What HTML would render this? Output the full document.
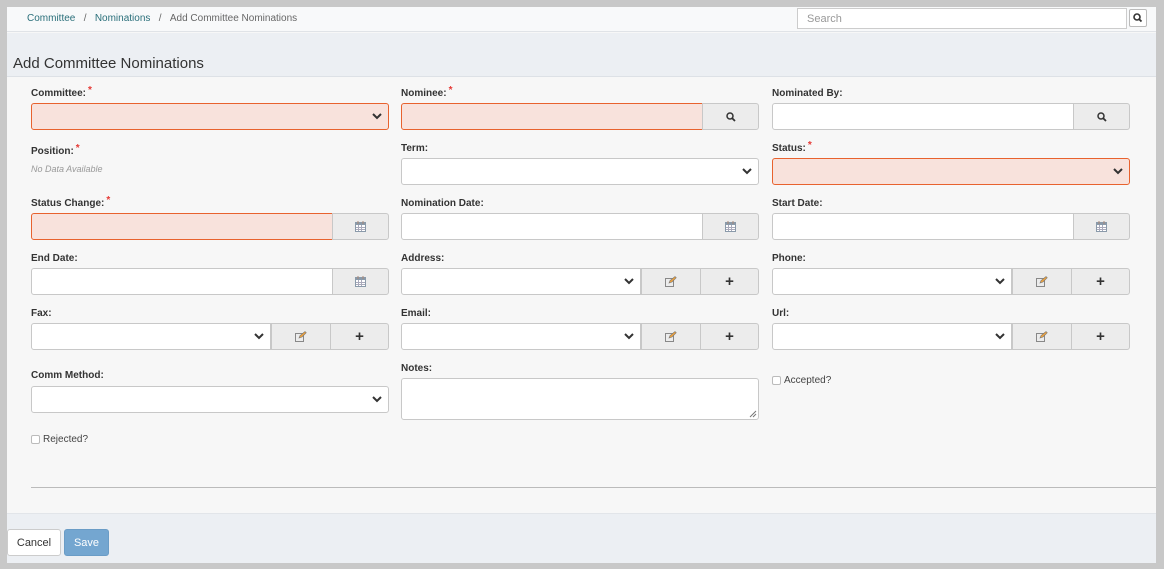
<!DOCTYPE html>
<html><head><style>
*{box-sizing:border-box;margin:0;padding:0}
body{width:1164px;height:569px;background:#c8c8c8;font-family:"Liberation Sans",sans-serif;position:relative;overflow:hidden}
.a{position:absolute}
.lbl{position:absolute;font-size:10px;font-weight:bold;color:#333;margin-top:1px}
.req{color:#e53935;font-size:10px;position:relative;top:-3px;margin-left:2px}
.in{position:absolute;height:27px;background:#fff;border:1px solid #c8c8c8;border-radius:3px}
.err{background:#f8e2dc;border-color:#e8622e}
.btn{position:absolute;height:27px;background:#ececec;border:1px solid #c8c8c8;border-radius:3px;display:flex;align-items:center;justify-content:center;color:#444}
.chev{position:absolute;right:5px;top:8px}
.plus{font-weight:bold;font-size:15px;color:#333}
</style></head><body>
<div class="a" style="left:7px;top:7px;width:1149px;height:556px;background:#f7f7f7"></div>
<div class="a" style="left:7px;top:7px;width:1149px;height:25px;background:#f8f9fa;border-bottom:1px solid #e0e3e7"></div>
<div class="a" style="left:27px;top:13px;font-size:10px;color:#666"><span style="color:#2a6f7a">Committee</span>&nbsp;&nbsp; / &nbsp;&nbsp;<span style="color:#2a6f7a">Nominations</span>&nbsp;&nbsp; / &nbsp;&nbsp;Add Committee Nominations</div>
<div class="a" style="left:797px;top:8px;width:330px;height:21px;background:#fff;border:1px solid #ccc;font-size:11px;color:#999;padding:4px 9px">Search</div>
<div class="a" style="left:1129px;top:9px;width:18px;height:18px;background:#fff;border:1px solid #bbb;border-radius:2px"><svg width="16" height="16" viewBox="0 0 16 16"><circle cx="7" cy="7" r="3" fill="none" stroke="#333" stroke-width="1.6"/><path d="M9.2 9.2L11.5 11.5" stroke="#333" stroke-width="1.8"/></svg></div>
<div class="a" style="left:7px;top:33px;width:1149px;height:44px;background:#eceff3;border-bottom:1px solid #dde1e6"></div>
<div class="a" style="left:13px;top:55px;font-size:15px;color:#333">Add Committee Nominations</div>
<div class="a" style="left:7px;top:513px;width:1149px;height:50px;background:#eceff3;border-top:1px solid #e2e5e9"></div>
<div class="a" style="left:31px;top:487px;width:1125px;height:1px;background:#bbb"></div>

<div class="lbl" style="left:31px;top:87px">Committee:<span class="req">*</span></div>
<div class="in err" style="left:31px;top:103px;width:358px"><svg class="chev" width="12" height="10"><path d="M2 2l4 4 4-4" fill="none" stroke="#333" stroke-width="2"/></svg></div>
<div class="lbl" style="left:401px;top:87px">Nominee:<span class="req">*</span></div>
<div class="in err" style="left:401px;top:103px;width:302px;border-radius:3px 0 0 3px"></div>
<div class="btn" style="left:702px;top:103px;width:57px;border-radius:0 3px 3px 0"><svg width="12" height="12"><circle cx="5" cy="5" r="3" fill="none" stroke="#333" stroke-width="1.5"/><path d="M7.2 7.2L10 10" stroke="#333" stroke-width="1.8"/></svg></div>
<div class="lbl" style="left:772px;top:87px">Nominated By:</div>
<div class="in" style="left:772px;top:103px;width:302px;border-radius:3px 0 0 3px"></div>
<div class="btn" style="left:1073px;top:103px;width:57px;border-radius:0 3px 3px 0"><svg width="12" height="12"><circle cx="5" cy="5" r="3" fill="none" stroke="#333" stroke-width="1.5"/><path d="M7.2 7.2L10 10" stroke="#333" stroke-width="1.8"/></svg></div>

<div class="lbl" style="left:31px;top:145px">Position:<span class="req">*</span></div>
<div class="a" style="left:31px;top:164px;font-size:9px;font-style:italic;color:#999">No Data Available</div>
<div class="lbl" style="left:401px;top:142px">Term:</div>
<div class="in" style="left:401px;top:158px;width:358px"><svg class="chev" width="12" height="10"><path d="M2 2l4 4 4-4" fill="none" stroke="#333" stroke-width="2"/></svg></div>
<div class="lbl" style="left:772px;top:142px">Status:<span class="req">*</span></div>
<div class="in err" style="left:772px;top:158px;width:358px"><svg class="chev" width="12" height="10"><path d="M2 2l4 4 4-4" fill="none" stroke="#333" stroke-width="2"/></svg></div>

<div class="lbl" style="left:31px;top:197px">Status Change:<span class="req">*</span></div>
<div class="in err" style="left:31px;top:213px;width:302px;border-radius:3px 0 0 3px"></div>
<div class="btn cal" style="left:332px;top:213px;width:57px;border-radius:0 3px 3px 0"></div>
<div class="lbl" style="left:401px;top:197px">Nomination Date:</div>
<div class="in" style="left:401px;top:213px;width:302px;border-radius:3px 0 0 3px"></div>
<div class="btn cal" style="left:702px;top:213px;width:57px;border-radius:0 3px 3px 0"></div>
<div class="lbl" style="left:772px;top:197px">Start Date:</div>
<div class="in" style="left:772px;top:213px;width:302px;border-radius:3px 0 0 3px"></div>
<div class="btn cal" style="left:1073px;top:213px;width:57px;border-radius:0 3px 3px 0"></div>

<div class="lbl" style="left:31px;top:252px">End Date:</div>
<div class="in" style="left:31px;top:268px;width:302px;border-radius:3px 0 0 3px"></div>
<div class="btn cal" style="left:332px;top:268px;width:57px;border-radius:0 3px 3px 0"></div>
<div class="lbl" style="left:401px;top:252px">Address:</div>
<div class="in" style="left:401px;top:268px;width:240px;border-radius:3px 0 0 3px"><svg class="chev" width="12" height="10"><path d="M2 2l4 4 4-4" fill="none" stroke="#333" stroke-width="2"/></svg></div>
<div class="btn ed" style="left:641px;top:268px;width:60px;border-radius:0"></div>
<div class="btn plus" style="left:700px;top:268px;width:59px;border-radius:0 3px 3px 0">+</div>
<div class="lbl" style="left:772px;top:252px">Phone:</div>
<div class="in" style="left:772px;top:268px;width:240px;border-radius:3px 0 0 3px"><svg class="chev" width="12" height="10"><path d="M2 2l4 4 4-4" fill="none" stroke="#333" stroke-width="2"/></svg></div>
<div class="btn ed" style="left:1012px;top:268px;width:60px;border-radius:0"></div>
<div class="btn plus" style="left:1071px;top:268px;width:59px;border-radius:0 3px 3px 0">+</div>

<div class="lbl" style="left:31px;top:307px">Fax:</div>
<div class="in" style="left:31px;top:323px;width:240px;border-radius:3px 0 0 3px"><svg class="chev" width="12" height="10"><path d="M2 2l4 4 4-4" fill="none" stroke="#333" stroke-width="2"/></svg></div>
<div class="btn ed" style="left:271px;top:323px;width:60px;border-radius:0"></div>
<div class="btn plus" style="left:330px;top:323px;width:59px;border-radius:0 3px 3px 0">+</div>
<div class="lbl" style="left:401px;top:307px">Email:</div>
<div class="in" style="left:401px;top:323px;width:240px;border-radius:3px 0 0 3px"><svg class="chev" width="12" height="10"><path d="M2 2l4 4 4-4" fill="none" stroke="#333" stroke-width="2"/></svg></div>
<div class="btn ed" style="left:641px;top:323px;width:60px;border-radius:0"></div>
<div class="btn plus" style="left:700px;top:323px;width:59px;border-radius:0 3px 3px 0">+</div>
<div class="lbl" style="left:772px;top:307px">Url:</div>
<div class="in" style="left:772px;top:323px;width:240px;border-radius:3px 0 0 3px"><svg class="chev" width="12" height="10"><path d="M2 2l4 4 4-4" fill="none" stroke="#333" stroke-width="2"/></svg></div>
<div class="btn ed" style="left:1012px;top:323px;width:60px;border-radius:0"></div>
<div class="btn plus" style="left:1071px;top:323px;width:59px;border-radius:0 3px 3px 0">+</div>

<div class="lbl" style="left:31px;top:369px">Comm Method:</div>
<div class="in" style="left:31px;top:386px;width:358px"><svg class="chev" width="12" height="10"><path d="M2 2l4 4 4-4" fill="none" stroke="#333" stroke-width="2"/></svg></div>
<div class="lbl" style="left:401px;top:362px">Notes:</div>
<div class="in" style="left:401px;top:378px;width:358px;height:42px"><svg class="a" style="right:1px;bottom:1px" width="8" height="8"><path d="M7 1L1 7M7 4L4 7" stroke="#777"/></svg></div>
<div class="a" style="left:772px;top:375px;font-size:10px;color:#444;display:flex;align-items:center"><span style="width:9px;height:9px;border:1px solid #bbb;border-radius:2px;background:#fff;margin-right:3px"></span>Accepted?</div>
<div class="a" style="left:31px;top:434px;font-size:10px;color:#444;display:flex;align-items:center"><span style="width:9px;height:9px;border:1px solid #bbb;border-radius:2px;background:#fff;margin-right:3px"></span>Rejected?</div>

<div class="a" style="left:7px;top:529px;width:54px;height:27px;background:#fff;border:1px solid #ccc;border-radius:3px;font-size:11px;color:#333;display:flex;align-items:center;justify-content:center">Cancel</div>
<div class="a" style="left:64px;top:529px;width:45px;height:27px;background:#74a6d0;border:1px solid #6a9cc6;border-radius:3px;font-size:11px;color:#fff;display:flex;align-items:center;justify-content:center">Save</div>

<script>
document.querySelectorAll('.cal').forEach(e=>e.innerHTML='<svg width="11" height="11"><rect x="0.5" y="1.5" width="10" height="9" fill="#fff" stroke="#8a9aaa"/><rect x="0.5" y="1.5" width="10" height="2.5" fill="#8a9aaa"/><path d="M3.5 4v6M6.5 4v6M1 6.5h9M1 8.5h9" stroke="#aab"/><path d="M3 0v3M8 0v3" stroke="#a87"/></svg>');
document.querySelectorAll('.ed').forEach(e=>e.innerHTML='<svg width="12" height="11"><rect x="0.5" y="2.5" width="8" height="8" fill="none" stroke="#888"/><path d="M4 7l1-2.5L10 0.5l1.3 1.3L7 6z" fill="#e8a040" stroke="#777" stroke-width="0.6"/></svg>');
</script>
</body></html>
